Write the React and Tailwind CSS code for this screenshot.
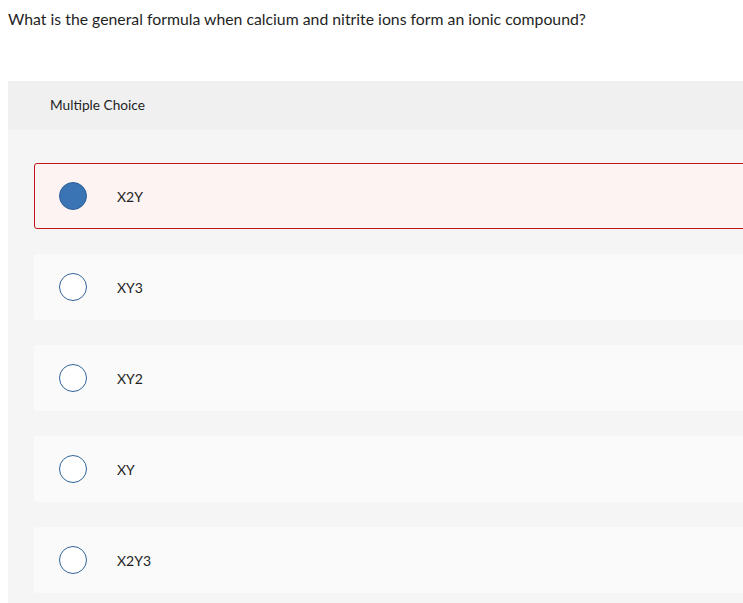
import React from 'react';

const options = [
  { label: 'X2Y', selected: true },
  { label: 'XY3' },
  { label: 'XY2' },
  { label: 'XY' },
  { label: 'X2Y3' },
];

const Radio = ({ selected }) => (
  <span
    className={
      'block w-[28px] h-[28px] rounded-full border ' +
      (selected ? 'bg-[#3b74b4] border-[#2f609a]' : 'bg-white border-[#2f6499]')
    }
  />
);

const App = () => {
  return (
    <div className="w-[743px] h-[603px] overflow-hidden bg-white text-[#1f1f1f]" style={{ fontFamily: 'Lato, "Open Sans", Arial, sans-serif' }}>
      <p className="pl-[8px] pt-[8px] text-[15.8px] leading-[21px]">
        What is the general formula when calcium and nitrite ions form an ionic compound?
      </p>
      <div className="ml-[8px] mt-[52px] w-[760px] bg-[#f5f5f5] pb-[20px]">
        <div className="h-[49px] bg-[#f0f0f0] flex items-center pl-[42px] text-[13.7px]">Multiple Choice</div>
        <div className="pl-[26px] pt-[33px] flex flex-col gap-[25px]">
          {options.map((o) => (
            <div
              key={o.label}
              className={
                'h-[66px] flex items-center rounded-[3px] ' +
                (o.selected ? 'bg-[#fdf3f2] border border-[#c0141c]' : 'bg-[#fafafa] border border-transparent')
              }
            >
              <div className="w-[74px] flex justify-center pl-[2px]">
                <Radio selected={o.selected} />
              </div>
              <span className="pl-[8px] text-[14px]">{o.label}</span>
            </div>
          ))}
        </div>
      </div>
    </div>
  );
};

export default App;
